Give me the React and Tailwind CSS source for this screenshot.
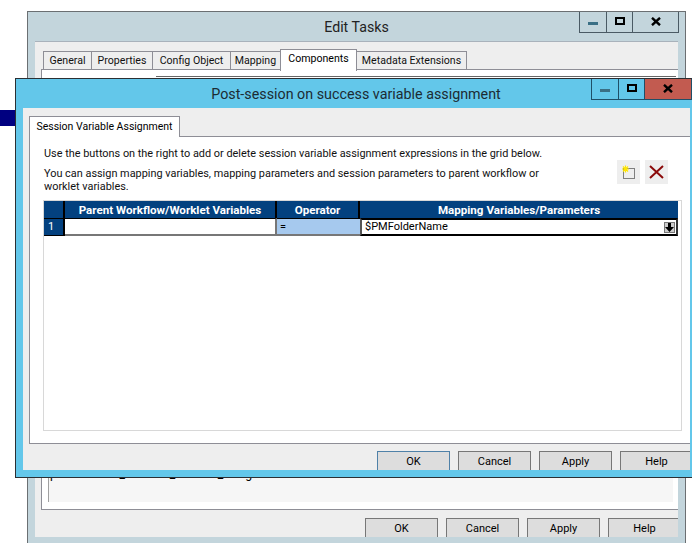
const font = "font-['Roboto','Noto_Sans',sans-serif]";

const WinButtons = ({ close, edge }) => (
  <div className={`flex h-[21px] border border-t-0 ${edge}`}>
    <div className={`w-[27px] flex items-center justify-center border-r ${edge}`}>
      <div className="w-[10px] h-[3px] mt-[3px] bg-[#3a6f85]"></div>
    </div>
    <div className={`w-[26px] flex items-center justify-center border-r ${edge}`}>
      <div className="w-[10px] h-[8px] border-2 border-black mb-[2px]"></div>
    </div>
    <div className={`${close} flex items-center justify-center pb-[2px]`}>
      <svg width="10" height="9" viewBox="0 0 10 9">
        <path d="M1 0.8 L9 8.2 M9 0.8 L1 8.2" stroke="#000" strokeWidth="2.4" fill="none" />
      </svg>
    </div>
  </div>
);

const Tab = ({ label, active, w }) => (
  <div
    className={
      active
        ? `${w} h-[22px] -mb-[2px] -ml-px z-10 bg-white border border-b-0 border-[#8e8e96] text-center text-[10.6px] leading-[18px] text-black`
        : `${w} h-[18px] bg-[#eeeeee] border border-[#8e8e96] border-b-0 -ml-px text-center text-[10.6px] leading-[18px] text-[#111]`
    }
  >
    {label}
  </div>
);

const DlgButton = ({ label, focus }) => (
  <div
    className={`w-[73px] h-[20px] shrink-0 bg-[#dddddd] border border-b-0 text-center text-[11px] leading-[19px] text-black ${
      focus ? "border-[#4f81a8]" : "border-[#777777]"
    }`}
  >
    {label}
  </div>
);

const App = () => {
  return (
    <div className={`relative w-[692px] h-[543px] overflow-hidden bg-white ${font}`}>
      <div className="absolute left-0 top-[110px] w-[15px] h-[16px] bg-[#000080]"></div>

      {/* Edit Tasks window */}
      <div className="absolute left-[27px] top-[11px] w-[659px] h-[540px] bg-[#c3d5dc] border border-[#6b6f72] flex flex-col">
        <div className="h-[29px] relative">
          <div className="text-center text-[14.2px] leading-[30px] text-[#222]">Edit Tasks</div>
          <div className="absolute right-[6px] top-0">
            <WinButtons close="w-[45px]" edge="border-[#4a5a64]" />
          </div>
        </div>
        <div className="ml-[7px] w-[643px] h-[496px] bg-[#eeeeee] border-t border-[#a9b2bb] overflow-hidden flex flex-col">
          <div className="flex pl-[9px] h-[27px] items-end shrink-0">
            <Tab label="General" w="w-[49px]" />
            <Tab label="Properties" w="w-[62px]" />
            <Tab label="Config Object" w="w-[79px]" />
            <Tab label="Mapping" w="w-[51px]" />
            <Tab label="Components" w="w-[77px]" active />
            <Tab label="Metadata Extensions" w="w-[111px]" />
          </div>
          <div className="ml-[6px] h-[441px] shrink-0 bg-white border-l border-t border-b border-[#8e8e96] flex flex-col justify-between pb-[7px] pl-[6px]">
            <div className="ml-[108px] mt-[6px] w-[520px] h-[3px] border-t border-[#666666] border-b border-b-[#cccccc]"></div>
            <div className="h-[60px] w-[625px] bg-[#f6f6f6] border-l border-[#a0a0a0] pt-[25px] pl-[1px]">
              <div className="text-[12.2px] leading-[14px] text-black">post-session_success_variable_assignment</div>
            </div>
          </div>
          <div className="flex gap-[8px] pl-[330px] pt-[8px]">
            <DlgButton label="OK" />
            <DlgButton label="Cancel" />
            <DlgButton label="Apply" />
            <DlgButton label="Help" />
          </div>
        </div>
      </div>

      {/* Post-session dialog */}
      <div className="absolute left-[15px] top-[78px] w-[680px] h-[400px] bg-[#63c7ea] border border-[#2b2f33] border-r-0 flex flex-col">
        <div className="h-[29px] relative">
          <div className="w-[680px] text-center text-[14.3px] leading-[30px] text-[#1c2b33]">Post-session on success variable assignment</div>
          <div className="absolute left-[575px] top-0">
            <WinButtons close="w-[46px] bg-[#c25b50]" edge="border-[#1f4f68]" />
          </div>
        </div>
        <div className="ml-[7px] w-[667px] h-[362px] bg-[#eeeeee] overflow-hidden flex flex-col">
          <div className="flex pl-[6px] h-[28px] items-end shrink-0">
            <div className="w-[151px] h-[21px] -mb-px z-10 bg-white border border-b-0 border-[#8e8e96] text-center text-[10.5px] leading-[19px] text-black">
              Session Variable Assignment
            </div>
          </div>
          <div className="ml-[6px] h-[308px] shrink-0 bg-white border-l border-t border-b border-[#8e8e96] pl-[13px] pt-[9px] flex flex-col">
            <div className="pl-px text-[10.9px] leading-[15px] text-[#111]">
              Use the buttons on the right to add or delete session variable assignment expressions in the grid below.
            </div>
            <div className="flex mt-[6px] pl-px">
              <div className="w-[520px] text-[10.9px] leading-[13px] text-[#111]">
                You can assign mapping variables, mapping parameters and session parameters to parent workflow or worklet variables.
              </div>
              <div className="flex gap-[5px] ml-[53px] -mt-[7px]">
                <div className="w-[23px] h-[24px] bg-[#eeeeee] flex items-center justify-center">
                  <svg width="15" height="15" viewBox="0 0 15 15">
                    <rect x="2.5" y="3.5" width="11" height="10" fill="none" stroke="#111" strokeDasharray="1 1" />
                    <path d="M1 4h7M4.5 0.5v7M2 1.5l5 5M7 1.5l-5 5" stroke="#ffe600" strokeWidth="1.2" />
                  </svg>
                </div>
                <div className="w-[23px] h-[24px] bg-[#eeeeee] flex items-center justify-center">
                  <svg width="15" height="14" viewBox="0 0 15 14">
                    <path d="M1 1l13 12M14 1L1 13" stroke="#8b0a0a" strokeWidth="2" fill="none" />
                  </svg>
                </div>
              </div>
            </div>
            <div className="mt-[7px] w-[639px] h-[231px] border border-[#d8d8d8] text-[11px]">
              <div className="flex h-[17px] bg-[#03417f] w-[634px] text-white text-[11.6px] font-bold leading-[18px] text-center">
                <div className="w-[21px] border-r-2 border-black"></div>
                <div className="w-[212px] border-r-2 border-black">Parent Workflow/Worklet Variables</div>
                <div className="w-[83px] border-r-2 border-black">Operator</div>
                <div className="w-[318px]">Mapping Variables/Parameters</div>
              </div>
              <div className="flex h-[18px]">
                <div className="w-[21px] bg-[#03417f] text-white border-y border-r-2 border-black leading-[15px] pl-[4px]">1</div>
                <div className="w-[212px] border-t border-b-2 border-t-black border-b-[#777777] border-r-2 border-r-[#777777]"></div>
                <div className="w-[83px] bg-[#a6c9ee] border-t border-b-2 border-t-black border-b-[#777777] leading-[15px] pl-[3px]">=</div>
                <div className="w-[318px] border-2 border-black border-l-[#555555] border-r-[#333333] flex items-center pl-[3px] text-black">
                  <span className="flex-1 text-[11px] leading-[14px]">$PMFolderName</span>
                  <div className="w-[11px] h-[11px] mr-[1px] border border-[#777777] bg-[#cccccc] flex items-center justify-center">
                    <svg width="9" height="9" viewBox="0 0 9 9">
                      <path d="M3 0h3v4h3L4.5 9 0 4h3z" fill="#000" />
                    </svg>
                  </div>
                </div>
              </div>
            </div>
          </div>
          <div className="flex gap-[8px] pl-[354px] pt-[7px]">
            <DlgButton label="OK" focus />
            <DlgButton label="Cancel" />
            <DlgButton label="Apply" />
            <DlgButton label="Help" />
          </div>
        </div>
      </div>
    </div>
  );
};

export default App;
